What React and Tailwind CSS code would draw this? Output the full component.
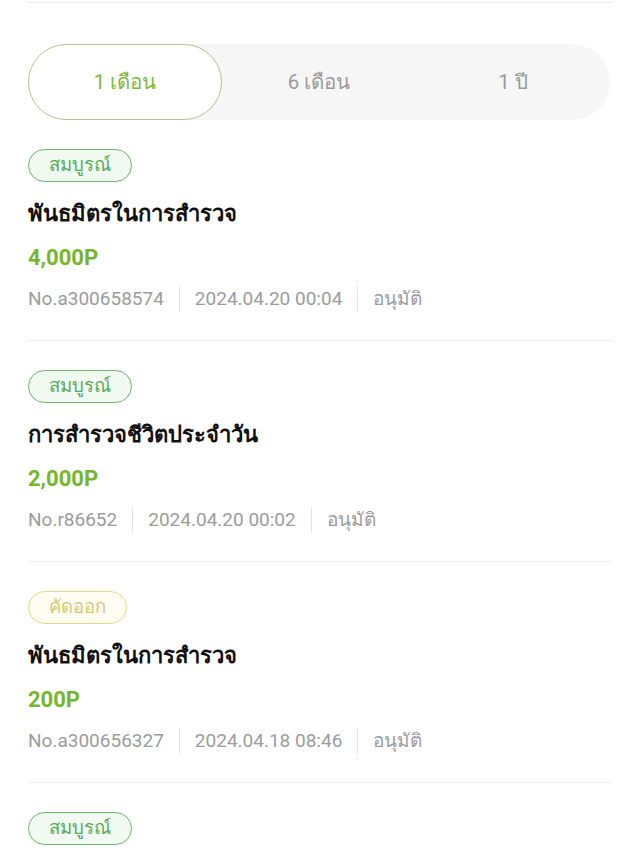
const items = [
  { status: "done", title: "พันธมิตรในการสำรวจ", points: "4,000P", no: "No.a300658574", date: "2024.04.20 00:04", state: "อนุมัติ" },
  { status: "done", title: "การสำรวจชีวิตประจำวัน", points: "2,000P", no: "No.r86652", date: "2024.04.20 00:02", state: "อนุมัติ" },
  { status: "out", title: "พันธมิตรในการสำรวจ", points: "200P", no: "No.a300656327", date: "2024.04.18 08:46", state: "อนุมัติ" },
  { status: "done", title: "พันธมิตรในการสำรวจ", points: "1,000P", no: "No.a300655120", date: "2024.04.17 21:10", state: "อนุมัติ" },
];

function Badge({ status }) {
  if (status === "out") {
    return (
      <span className="inline-flex h-[33px] items-center rounded-full border-[1.5px] border-[#e8d688] bg-[#fffdf1] px-[20px] text-[18.5px] text-[#dbc47c]">
        คัดออก
      </span>
    );
  }
  return (
    <span className="inline-flex h-[33px] items-center rounded-full border-[1.5px] border-[#6cb76c] bg-[#f1faf0] px-[20px] text-[18.5px] text-[#5aa85a]">
      สมบูรณ์
    </span>
  );
}

export default function App() {
  const tabs = ["1 เดือน", "6 เดือน", "1 ปี"];

  return (
    <div className="h-[854px] overflow-hidden bg-white px-[28px] font-['Roboto','Noto_Sans',sans-serif]">
      <div className="h-[3px] w-[584px] border-b border-[#ececec]" />

      {/* period tabs */}
      <div className="mt-[41px] grid h-[76px] w-[582px] grid-cols-3 rounded-full bg-[#f6f6f6]">
        {tabs.map((t, i) => (
          <div
            key={t}
            className={
              i === 0
                ? "flex items-center justify-center rounded-full border border-[#bcc291] bg-white text-[20.5px] text-[#7fb83d]"
                : "flex items-center justify-center text-[20.5px] text-[#9a9a9a]"
            }
          >
            {t}
          </div>
        ))}
      </div>

      {/* history list */}
      <div className="mt-[29px] w-[584px]">
        {items.map((it, i) => (
          <div key={i} className={i === 0 ? "border-b border-[#ebebeb] pb-[28px]" : "border-b border-[#ebebeb] pt-[29px] pb-[28px]"}>
            <Badge status={it.status} />
            <div className="mt-[18px] text-[22px] font-bold leading-[28px] text-[#111]">{it.title}</div>
            <div className="mt-[16px] text-[22px] font-bold leading-[28px] text-[#74b62f]">{it.points}</div>
            <div className="mt-[14px] flex items-center text-[19px] leading-[26px] text-[#9c9c9c]">
              <span>{it.no}</span>
              <span className="mx-[15px] h-[26px] w-px bg-[#e3e3e3]" />
              <span>{it.date}</span>
              <span className="mx-[15px] h-[26px] w-px bg-[#e3e3e3]" />
              <span>{it.state}</span>
            </div>
          </div>
        ))}
      </div>
    </div>
  );
}
